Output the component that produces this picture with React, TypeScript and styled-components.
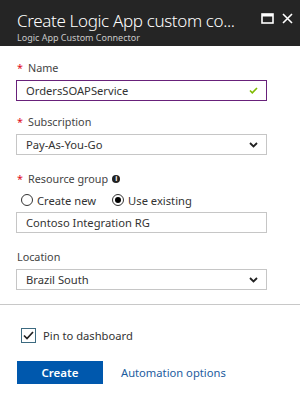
import React from "react";
import styled, { createGlobalStyle } from "styled-components";

const GlobalStyle = createGlobalStyle`
  html, body {
    margin: 0;
    padding: 0;
    background: #ffffff;
  }
  body {
    font-family: "Noto Sans", "Open Sans", sans-serif;
    color: #333333;
  }
`;

const Blade = styled.div`
  width: 300px;
  height: 400px;
  display: flex;
  flex-direction: column;
  background: #ffffff;
  overflow: hidden;
`;

const Header = styled.header`
  height: 46px;
  box-sizing: border-box;
  background: #252525;
  display: flex;
  align-items: flex-start;
  justify-content: space-between;
  padding: 9px 7px 0 17px;
`;

const TitleBlock = styled.div`
  display: flex;
  flex-direction: column;
  min-width: 0;
`;

const Title = styled.h1`
  margin: 0;
  font-size: 17px;
  font-weight: 300;
  letter-spacing: -0.35px;
  line-height: 23px;
  color: #ffffff;
  white-space: nowrap;
`;

const Subtitle = styled.div`
  font-size: 9px;
  line-height: 11px;
  color: #c8c8c8;
`;

const HeaderIcons = styled.div`
  display: flex;
  flex-shrink: 0;
  gap: 8px;
  padding-top: 4px;
`;

const Form = styled.div`
  display: flex;
  flex-direction: column;
  padding: 15px 33px 14px 16px;
`;

const Field = styled.div<{ $gap?: number }>`
  display: flex;
  flex-direction: column;
  margin-bottom: ${(p) => p.$gap ?? 0}px;
`;

const Label = styled.div`
  display: flex;
  align-items: center;
  font-size: 10.8px;
  line-height: 14px;
  color: #444444;
  padding-left: 1px;
  margin-bottom: 5px;
`;

const Star = styled.span`
  color: #e00b1c;
  margin-right: 5px;
`;

const Box = styled.div<{ $active?: boolean }>`
  height: 21px;
  box-sizing: border-box;
  border: 1px solid ${(p) => (p.$active ? "#68217a" : "#c6c6c6")};
  display: flex;
  align-items: center;
  justify-content: space-between;
  padding: 0 8px 0 9px;
  font-size: 11.2px;
  color: #333333;
`;

const RadioRow = styled.div`
  display: flex;
  align-items: center;
  height: 18px;
  gap: 16px;
  padding-left: 5px;
  margin-bottom: 3px;
`;

const Radio = styled.label`
  display: flex;
  align-items: center;
  gap: 4px;
  font-size: 11.2px;
  color: #333333;
`;

const RadioDot = styled.span<{ $checked?: boolean }>`
  width: 10px;
  height: 10px;
  border: 1px solid #333333;
  border-radius: 50%;
  display: flex;
  align-items: center;
  justify-content: center;
  &::after {
    content: "";
    width: 6px;
    height: 6px;
    border-radius: 50%;
    background: ${(p) => (p.$checked ? "#000000" : "transparent")};
  }
`;

const Divider = styled.hr`
  margin: 0;
  border: none;
  border-top: 1px solid #c8c8c8;
`;

const Footer = styled.div`
  display: flex;
  flex-direction: column;
  padding: 23px 16px 0 21px;
`;

const CheckRow = styled.label`
  display: flex;
  align-items: center;
  gap: 7px;
  font-size: 11.2px;
  color: #333333;
  margin-bottom: 18px;
`;

const CheckBox = styled.span`
  width: 13px;
  height: 13px;
  border: 1px solid #3c6a80;
  display: flex;
  align-items: center;
  justify-content: center;
`;

const Actions = styled.div`
  display: flex;
  align-items: center;
  gap: 18px;
  margin-left: -4px;
`;

const CreateButton = styled.button`
  width: 86px;
  height: 23px;
  border: none;
  background: #0058ad;
  color: #ffffff;
  font-family: inherit;
  font-size: 11.5px;
  font-weight: 600;
  padding: 0;
`;

const Link = styled.span`
  font-size: 11.2px;
  color: #1c5c9e;
`;

const InfoIcon = styled.span`
  width: 8px;
  height: 8px;
  border-radius: 50%;
  background: #222222;
  color: #ffffff;
  font-size: 7px;
  font-weight: 700;
  line-height: 8px;
  text-align: center;
  margin-left: 4px;
`;

const Chevron = () => (
  <svg width="9" height="6" viewBox="0 0 9 6">
    <path d="M1 1 L4.5 4.5 L8 1" fill="none" stroke="#222" strokeWidth="1.8" />
  </svg>
);

export default function App() {
  return (
    <Blade>
      <GlobalStyle />
      <Header>
        <TitleBlock>
          <Title>Create Logic App custom co...</Title>
          <Subtitle>Logic App Custom Connector</Subtitle>
        </TitleBlock>
        <HeaderIcons>
          <svg width="13" height="11" viewBox="0 0 13 11">
            <rect x="1" y="1" width="11" height="9" fill="none" stroke="#fff" strokeWidth="1.6" />
            <rect x="1" y="1" width="11" height="2.5" fill="#fff" />
          </svg>
          <svg width="11" height="11" viewBox="0 0 11 11">
            <path d="M1 1 L10 10 M10 1 L1 10" stroke="#fff" strokeWidth="1.6" />
          </svg>
        </HeaderIcons>
      </Header>
      <Form>
        <Field $gap={14}>
          <Label>
            <Star>*</Star>Name
          </Label>
          <Box $active>
            OrdersSOAPService
            <svg width="9" height="7" viewBox="0 0 9 7">
              <path d="M1 3.5 L3.3 5.8 L8 1" fill="none" stroke="#7fba00" strokeWidth="1.6" />
            </svg>
          </Box>
        </Field>
        <Field $gap={17}>
          <Label>
            <Star>*</Star>Subscription
          </Label>
          <Box>
            Pay-As-You-Go
            <Chevron />
          </Box>
        </Field>
        <Field $gap={17}>
          <Label>
            <Star>*</Star>Resource group<InfoIcon>i</InfoIcon>
          </Label>
          <RadioRow>
            <Radio>
              <RadioDot />
              Create new
            </Radio>
            <Radio>
              <RadioDot $checked />
              Use existing
            </Radio>
          </RadioRow>
          <Box>Contoso Integration RG</Box>
        </Field>
        <Field>
          <Label>Location</Label>
          <Box>
            Brazil South
            <Chevron />
          </Box>
        </Field>
      </Form>
      <Divider />
      <Footer>
        <CheckRow>
          <CheckBox>
            <svg width="11" height="9" viewBox="0 0 11 9">
              <path d="M1 4.5 L4 7.5 L10 1" fill="none" stroke="#222" strokeWidth="1.7" />
            </svg>
          </CheckBox>
          Pin to dashboard
        </CheckRow>
        <Actions>
          <CreateButton>Create</CreateButton>
          <Link>Automation options</Link>
        </Actions>
      </Footer>
    </Blade>
  );
}
